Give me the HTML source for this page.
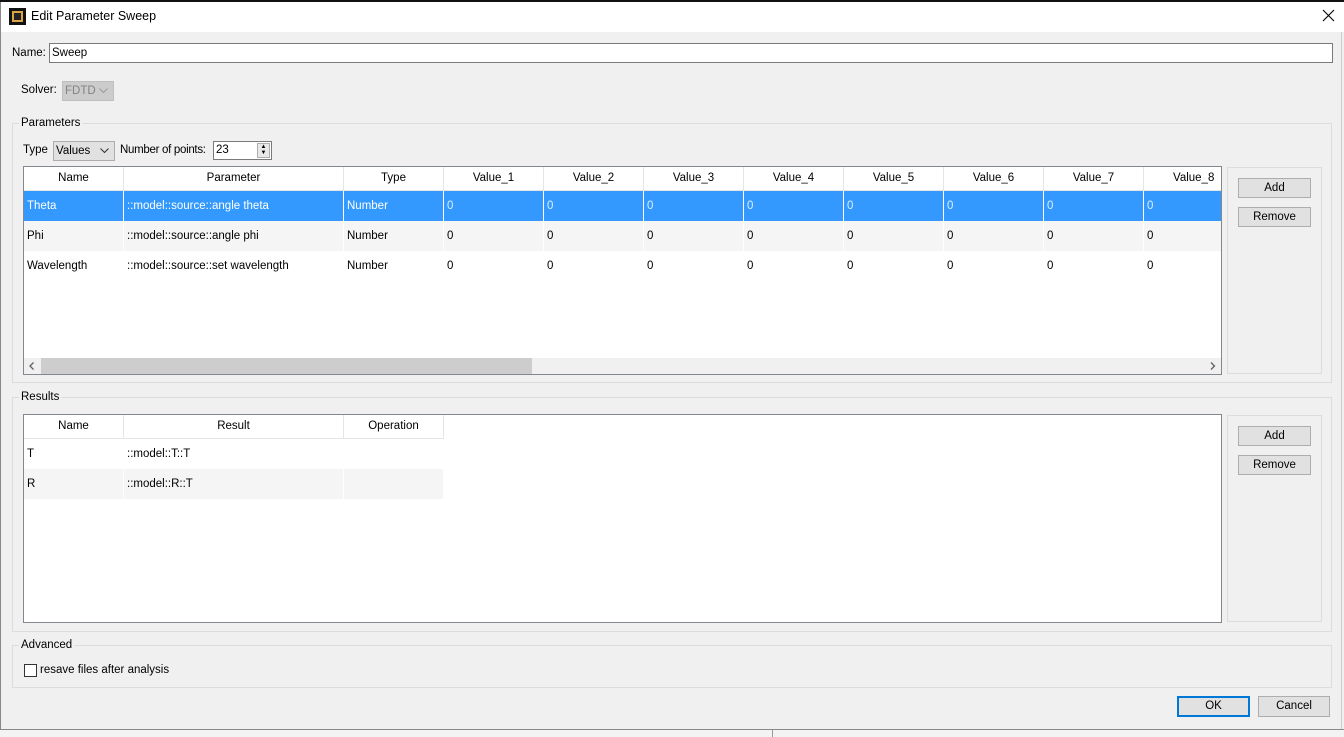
<!DOCTYPE html>
<html><head><meta charset="utf-8"><style>
*{box-sizing:border-box;margin:0;padding:0}
body{width:1344px;height:737px;background:#f0f0f0;font-family:"Liberation Sans",sans-serif;font-size:11.5px;color:#000;position:relative;overflow:hidden}
.a{position:absolute}
.title{left:0;top:0;width:1344px;height:32px;background:#fff;border-left:1px solid #888}
.grp{border:1px solid #dcdcdc;}
.btn{position:absolute;background:#e1e1e1;border:1px solid #adadad;text-align:center;line-height:18px}
.tbl{background:#fff;border:1px solid #828790;overflow:hidden}
.hd{position:absolute;height:24px;line-height:23px;text-align:center;border-right:1px solid #e5e5e5;border-bottom:1px solid #e5e5e5;background:#fff;white-space:nowrap}
.c{position:absolute;height:30px;line-height:30px;padding-left:3px;border-right:1px solid #fff;white-space:nowrap}
.sel{background:#3399ff;color:#fff;border-right-color:#fff}
.alt{background:#f5f5f5}
</style></head><body>
<div class="a" style="left:0;top:0;width:1344px;height:2px;background:#111"></div>
<div class="a title" style="top:2px;height:30px"></div>
<div class="a" style="left:9px;top:8px;width:17px;height:17px;background:#111;"><div class="a" style="left:3px;top:3px;width:11px;height:11px;border:2px solid #d9a441;background:#222"></div></div>
<div class="a" style="left:31px;top:9px;font-size:12.5px">Edit Parameter Sweep</div>
<svg class="a" style="left:1322px;top:9px" width="13" height="13"><path d="M1 1L12 12M12 1L1 12" stroke="#000" stroke-width="1.1"/></svg>
<div class="a" style="left:0;top:32px;width:1px;height:698px;background:#888"></div>
<div class="a" style="left:1341px;top:32px;width:1px;height:698px;background:#ccc"></div>
<div class="a" style="left:0;top:729px;width:1344px;height:1px;background:#888"></div>
<div class="a" style="left:0;top:730px;width:1344px;height:7px;background:#f3f3f3"></div>
<div class="a" style="left:772px;top:730px;width:1px;height:7px;background:#999"></div>

<div class="a" style="left:12px;top:47px">Name:</div>
<div class="a" style="left:49px;top:43px;width:1284px;height:20px;background:#fff;border:1px solid #7a7a7a;padding-left:2px;line-height:18px">Sweep</div>
<div class="a" style="left:21px;top:84px">Solver:</div>
<div class="a" style="left:62px;top:81px;width:52px;height:20px;background:#ccc;border:1px solid #bfbfbf;color:#838383;padding-left:2px;line-height:18px">FDTD</div>
<svg class="a" style="left:99px;top:88px" width="9" height="6"><path d="M0.5 0.5L4.5 4.5L8.5 0.5" stroke="#999" fill="none"/></svg>

<div class="a grp" style="left:12px;top:123px;width:1320px;height:260px"></div>
<div class="a" style="left:19px;top:117px;background:#f0f0f0;padding:0 2px">Parameters</div>
<div class="a" style="left:23px;top:144px">Type</div>
<div class="a" style="left:53px;top:141px;width:62px;height:20px;background:#e1e1e1;border:1px solid #adadad;padding-left:2px;line-height:18px">Values</div>
<svg class="a" style="left:100px;top:148px" width="9" height="6"><path d="M0.5 0.5L4.5 4.5L8.5 0.5" stroke="#333" fill="none"/></svg>
<div class="a" style="left:120px;top:144px;letter-spacing:-0.3px">Number of points:</div>
<div class="a" style="left:213px;top:141px;width:59px;height:19px;background:#fff;border:1px solid #7a7a7a;padding-left:2px;line-height:17px">23<div class="a" style="right:1px;top:1px;width:13px;height:15px;background:#e8e8e8;border:1px solid #adadad;font-size:6px;line-height:6px;text-align:center">▲<br>▼</div></div>

<div class="a tbl" style="left:23px;top:166px;width:1199px;height:209px">
<div class="hd" style="left:0;width:100px">Name</div>
<div class="hd" style="left:100px;width:220px">Parameter</div>
<div class="hd" style="left:320px;width:100px">Type</div>
<div class="hd" style="left:420px;width:100px">Value_1</div>
<div class="hd" style="left:520px;width:100px">Value_2</div>
<div class="hd" style="left:620px;width:100px">Value_3</div>
<div class="hd" style="left:720px;width:100px">Value_4</div>
<div class="hd" style="left:820px;width:100px">Value_5</div>
<div class="hd" style="left:920px;width:100px">Value_6</div>
<div class="hd" style="left:1020px;width:100px">Value_7</div>
<div class="hd" style="left:1120px;width:100px;text-align:left;padding-left:29px">Value_8</div>
<div class="a sel" style="left:0;top:24px;width:1199px;height:30px"></div>
<div class="c sel" style="left:0;top:24px;width:100px">Theta</div>
<div class="c sel" style="left:100px;top:24px;width:220px">::model::source::angle theta</div>
<div class="c sel" style="left:320px;top:24px;width:100px">Number</div>
<div class="c sel" style="left:420px;top:24px;width:100px;color:#dbeeff">0</div><div class="c sel" style="left:520px;top:24px;width:100px;color:#dbeeff">0</div><div class="c sel" style="left:620px;top:24px;width:100px;color:#dbeeff">0</div><div class="c sel" style="left:720px;top:24px;width:100px;color:#dbeeff">0</div><div class="c sel" style="left:820px;top:24px;width:100px;color:#dbeeff">0</div><div class="c sel" style="left:920px;top:24px;width:100px;color:#dbeeff">0</div><div class="c sel" style="left:1020px;top:24px;width:100px;color:#dbeeff">0</div><div class="c sel" style="left:1120px;top:24px;width:100px;color:#dbeeff">0</div>
<div class="a alt" style="left:0;top:54px;width:1199px;height:30px"></div>
<div class="c alt" style="left:0;top:54px;width:100px">Phi</div>
<div class="c alt" style="left:100px;top:54px;width:220px">::model::source::angle phi</div>
<div class="c alt" style="left:320px;top:54px;width:100px">Number</div>
<div class="c alt" style="left:420px;top:54px;width:100px">0</div><div class="c alt" style="left:520px;top:54px;width:100px">0</div><div class="c alt" style="left:620px;top:54px;width:100px">0</div><div class="c alt" style="left:720px;top:54px;width:100px">0</div><div class="c alt" style="left:820px;top:54px;width:100px">0</div><div class="c alt" style="left:920px;top:54px;width:100px">0</div><div class="c alt" style="left:1020px;top:54px;width:100px">0</div><div class="c alt" style="left:1120px;top:54px;width:100px">0</div>
<div class="c" style="left:0;top:84px;width:100px">Wavelength</div>
<div class="c" style="left:100px;top:84px;width:220px">::model::source::set wavelength</div>
<div class="c" style="left:320px;top:84px;width:100px">Number</div>
<div class="c" style="left:420px;top:84px;width:100px">0</div><div class="c" style="left:520px;top:84px;width:100px">0</div><div class="c" style="left:620px;top:84px;width:100px">0</div><div class="c" style="left:720px;top:84px;width:100px">0</div><div class="c" style="left:820px;top:84px;width:100px">0</div><div class="c" style="left:920px;top:84px;width:100px">0</div><div class="c" style="left:1020px;top:84px;width:100px">0</div><div class="c" style="left:1120px;top:84px;width:100px">0</div>
<div class="a" style="left:0;top:191px;width:1199px;height:16px;background:#f0f0f0"></div>
<div class="a" style="left:17px;top:191px;width:491px;height:16px;background:#cdcdcd"></div>
<svg class="a" style="left:5px;top:195px" width="6" height="8"><path d="M4.5 0.5L1 4L4.5 7.5" stroke="#606060" fill="none" stroke-width="1.3"/></svg>
<svg class="a" style="left:1186px;top:195px" width="6" height="8"><path d="M1 0.5L4.5 4L1 7.5" stroke="#606060" fill="none" stroke-width="1.3"/></svg>
</div>
<div class="a grp" style="left:1227px;top:167px;width:95px;height:207px"></div>
<div class="btn" style="left:1238px;top:178px;width:73px;height:20px">Add</div>
<div class="btn" style="left:1238px;top:207px;width:73px;height:20px">Remove</div>

<div class="a grp" style="left:12px;top:397px;width:1320px;height:235px"></div>
<div class="a" style="left:19px;top:391px;background:#f0f0f0;padding:0 2px">Results</div>
<div class="a tbl" style="left:23px;top:414px;width:1199px;height:209px">
<div class="hd" style="left:0;width:100px">Name</div>
<div class="hd" style="left:100px;width:220px">Result</div>
<div class="hd" style="left:320px;width:100px">Operation</div>
<div class="c" style="left:0;top:24px;width:100px">T</div>
<div class="c" style="left:100px;top:24px;width:220px">::model::T::T</div>
<div class="c alt" style="left:0;top:54px;width:100px">R</div>
<div class="c alt" style="left:100px;top:54px;width:220px">::model::R::T</div>
<div class="c alt" style="left:320px;top:54px;width:100px"></div>
</div>
<div class="a grp" style="left:1227px;top:415px;width:95px;height:207px"></div>
<div class="btn" style="left:1238px;top:426px;width:73px;height:20px">Add</div>
<div class="btn" style="left:1238px;top:455px;width:73px;height:20px">Remove</div>

<div class="a grp" style="left:12px;top:645px;width:1320px;height:43px"></div>
<div class="a" style="left:19px;top:639px;background:#f0f0f0;padding:0 2px">Advanced</div>
<div class="a" style="left:24px;top:664px;width:13px;height:13px;background:#fff;border:1px solid #333"></div>
<div class="a" style="left:40px;top:664px">resave files after analysis</div>

<div class="btn" style="left:1177px;top:696px;width:73px;height:21px;border:2px solid #0078d7;line-height:17px">OK</div>
<div class="btn" style="left:1258px;top:696px;width:72px;height:21px;line-height:19px">Cancel</div>
</body></html>
